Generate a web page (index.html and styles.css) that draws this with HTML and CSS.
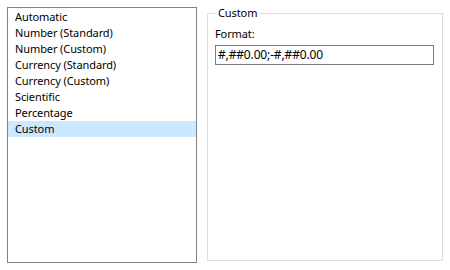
FILE: index.html
```html
<!DOCTYPE html>
<html>
<head>
<meta charset="utf-8">
<link rel="stylesheet" href="styles.css">
</head>
<body>
<div class="dialog">
  <ul class="listbox">
    <li class="item">Automatic</li>
    <li class="item">Number (Standard)</li>
    <li class="item">Number (Custom)</li>
    <li class="item">Currency (Standard)</li>
    <li class="item">Currency (Custom)</li>
    <li class="item">Scientific</li>
    <li class="item">Percentage</li>
    <li class="item selected">Custom</li>
  </ul>
  <fieldset class="group">
    <legend class="group-title">Custom</legend>
    <div class="field-label">Format:</div>
    <div class="textbox">#,##0.00;-#,##0.00</div>
  </fieldset>
</div>
</body>
</html>
```
FILE: styles.css
```css
html, body {
  margin: 0;
  padding: 0;
  background: #ffffff;
}
body {
  font-family: "Noto Sans", "Open Sans", sans-serif;
  font-size: 11px;
  letter-spacing: -0.1px;
  color: #000000;
  width: 450px;
  height: 270px;
  overflow: hidden;
}
.dialog {
  display: flex;
  align-items: flex-start;
  gap: 10px;
  padding: 7px 0 0 7px;
}
.listbox {
  list-style: none;
  margin: 0;
  padding: 1px 0 0 0;
  box-sizing: border-box;
  width: 190px;
  height: 256px;
  border: 1px solid #828282;
  display: flex;
  flex-direction: column;
}
.item {
  height: 16px;
  line-height: 16px;
  padding-left: 7px;
  white-space: nowrap;
}
.item.selected {
  background: #cce8ff;
}
.group {
  box-sizing: border-box;
  margin: -1px 0 0 0;
  padding: 0 0 0 7px;
  width: 236px;
  height: 255px;
  border: 1px solid #dcdcdc;
  min-width: 0;
}
.group-title {
  margin-left: 0;
  padding: 0 2px 0 3px;
  line-height: 14px;
  height: 14px;
}
.field-label {
  margin-top: 6px;
  line-height: 16px;
  height: 16px;
}
.textbox {
  box-sizing: border-box;
  margin-top: 3px;
  width: 219px;
  height: 20px;
  border: 1px solid #7a7a7a;
  padding-left: 2px;
  font-size: 12px;
  letter-spacing: -0.15px;
  line-height: 18px;
  white-space: nowrap;
}
```
